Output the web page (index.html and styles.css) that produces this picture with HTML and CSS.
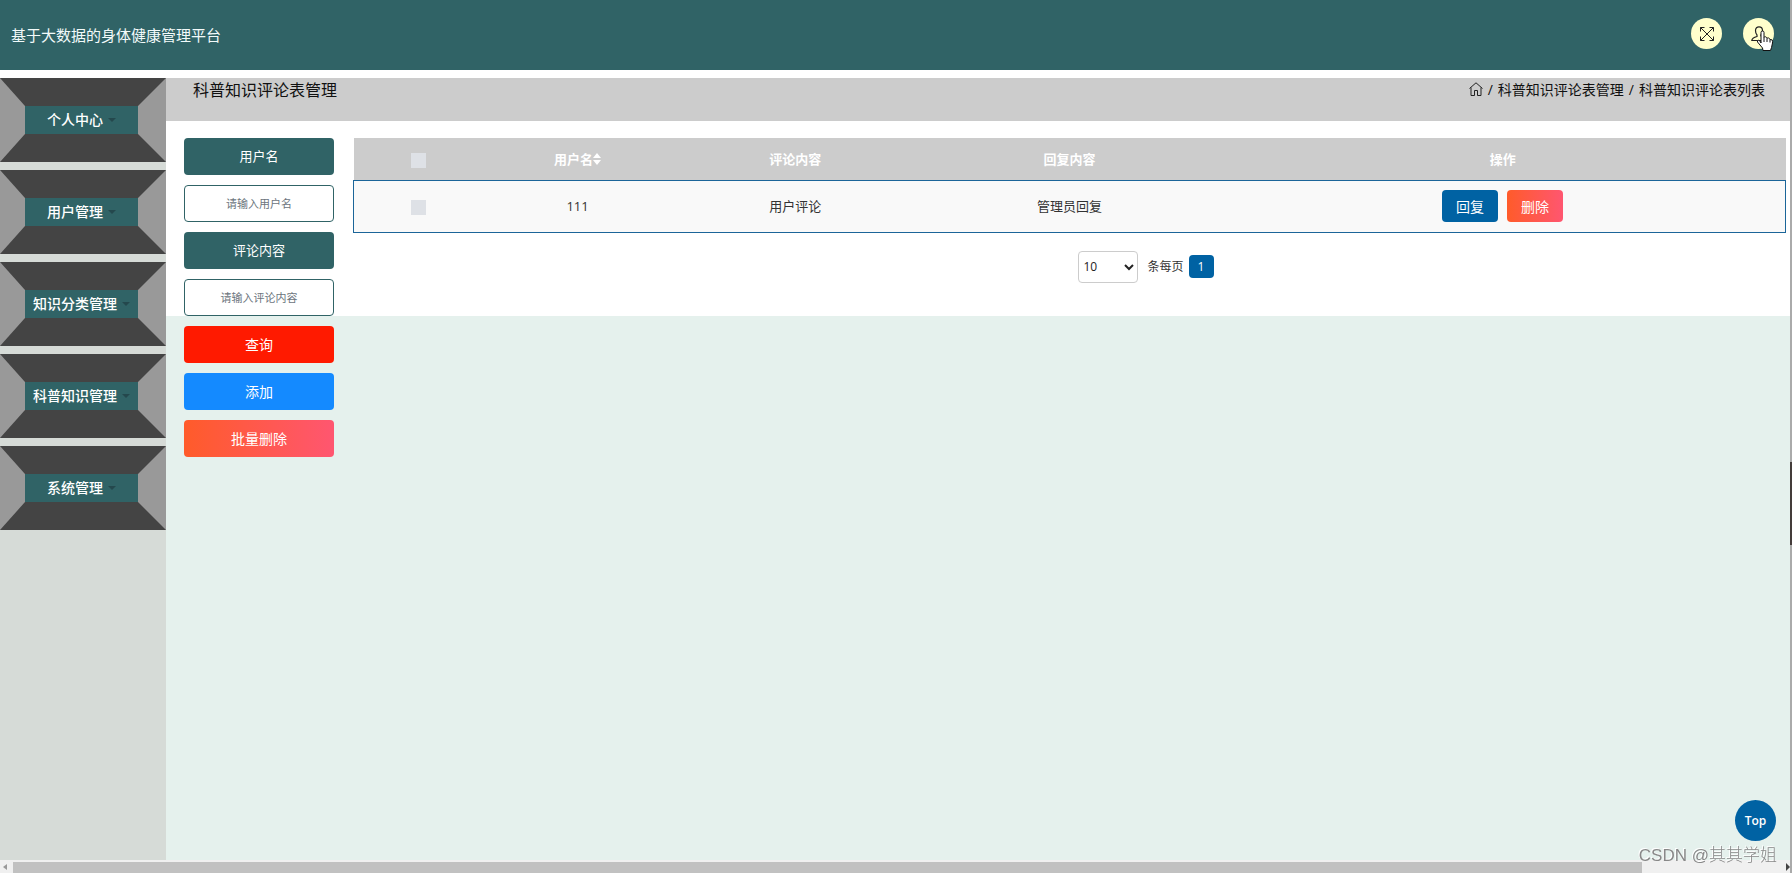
FILE: index.html
```
<!DOCTYPE html>
<html lang="zh-CN">
<head>
<meta charset="UTF-8">
<meta name="viewport" content="width=device-width, initial-scale=1.0">
<title>基于大数据的身体健康管理平台</title>
<link rel="stylesheet" href="styles.css">
</head>
<body>

<header class="topbar">
    <div class="brand">基于大数据的身体健康管理平台</div>
    <div class="topbar-actions">
        <button class="round-btn" type="button" aria-label="全屏">
            <svg width="16" height="16" viewBox="0 0 16 16" fill="none" stroke="#222" stroke-width="1">
                <path d="M1.5 1.5l13 13M14.5 1.5l-13 13M1.5 5.5v-4h4M10.5 1.5h4v4M14.5 10.5v4h-4M5.5 14.5h-4v-4"/>
            </svg>
        </button>
        <button class="round-btn" type="button" aria-label="用户">
            <svg width="16" height="16" viewBox="0 0 16 16" fill="none" stroke="#222" stroke-width="1.2">
                <path d="M6 9C4.8 7.8 4.5 6 4.5 4.5C4.500 2.200 6 .8 8 .8s3.500 1.400 3.500 3.700c0 1.500-.3 3.300-1.500 4.500v1l5 2.500v2H.8c.2-2 1.200-3 5.200-4z"/>
            </svg>
            <svg class="pointer" width="18" height="22" viewBox="0 0 18 22">
                <path d="M5 13V2.5Q5 1 6.5 1T8 2.5V7.5Q8.3 6.5 9.5 6.800T11 8.5Q11.5 7.5 12.7 8T14 9.8Q15 9 16 10T16.5 13L15.5 17.5L14.5 20.5H7L6.5 18L1.5 12Q1 10.5 2.5 10.3T5 13Z" fill="#fff" stroke="#111"/>
                <path d="M8 7.5V12M11 8.5V12M14 10V12.5" fill="none" stroke="#111"/>
            </svg>
        </button>
    </div>
</header>

<div class="layout">
    <nav class="sidebar">
        <button class="menu-item" type="button">个人中心<span class="caret"></span></button>
        <button class="menu-item" type="button">用户管理<span class="caret"></span></button>
        <button class="menu-item" type="button">知识分类管理<span class="caret"></span></button>
        <button class="menu-item" type="button">科普知识管理<span class="caret"></span></button>
        <button class="menu-item" type="button">系统管理<span class="caret"></span></button>
    </nav>

    <main class="content">
        <div class="page-head">
            <h1>科普知识评论表管理</h1>
            <div class="breadcrumb">
                <a href="#" aria-label="首页">
                    <svg width="14" height="14" viewBox="0 0 14 14" fill="none" stroke="#222" stroke-width="1">
                        <path d="M.5 6.5L7 .8l6.5 5.7M2 5.5v8h3.5v-5h3v5H12v-8"/>
                    </svg>
                </a>
                <span>/</span>
                <span>科普知识评论表管理</span>
                <span>/</span>
                <span>科普知识评论表列表</span>
            </div>
        </div>

        <div class="panel">
            <form class="filters">
                <label class="filter-label" for="username">用户名</label>
                <input class="filter-input" id="username" type="text" placeholder="请输入用户名">
                <label class="filter-label" for="comment">评论内容</label>
                <input class="filter-input" id="comment" type="text" placeholder="请输入评论内容">
                <button class="filter-btn search" type="button">查询</button>
                <button class="filter-btn add" type="button">添加</button>
                <button class="filter-btn remove" type="button">批量删除</button>
            </form>

            <div class="list">
                <table class="data-table">
                    <thead>
                        <tr>
                            <th class="col-check"><input class="check" type="checkbox" aria-label="全选"></th>
                            <th class="col-user">用户名<svg class="sort" width="8" height="12" viewBox="0 0 8 12" fill="#fff"><path d="M0 5l4-5 4 5zM0 7l4 5 4-5z"/></svg></th>
                            <th class="col-comment">评论内容</th>
                            <th class="col-reply">回复内容</th>
                            <th>操作</th>
                        </tr>
                    </thead>
                    <tbody>
                        <tr>
                            <td><input class="check" type="checkbox" aria-label="选择"></td>
                            <td>111</td>
                            <td>用户评论</td>
                            <td>管理员回复</td>
                            <td>
                                <div class="row-actions">
                                    <button class="row-btn reply" type="button">回复</button>
                                    <button class="row-btn remove" type="button">删除</button>
                                </div>
                            </td>
                        </tr>
                    </tbody>
                </table>

                <div class="pagination">
                    <select class="page-size" id="page-size">
                        <option>10</option>
                        <option>25</option>
                        <option>50</option>
                    </select>
                    <label class="page-text" for="page-size">条每页</label>
                    <button class="page-num" type="button">1</button>
                </div>
            </div>
        </div>
    </main>
</div>

<div class="scrollbar">
    <svg class="arrow" width="13" height="12" viewBox="0 0 13 12"><path d="M3 6l4-3v6z" fill="#999"/></svg>
    <div class="thumb"></div>
    <svg class="arrow" width="13" height="12" viewBox="0 0 13 12"><path d="M9 2l4 4-4 4z" fill="#444"/></svg>
</div>

<button class="back-top" type="button">Top</button>
<div class="watermark">CSDN @其其学姐</div>

</body>
</html>
```

FILE: styles.css
```
* {
    box-sizing: border-box;
}
html {
    background: linear-gradient(#aaa 0 462px, #443c3a 462px 545px, #aaa 545px);
}
body {
    margin: 0 2px 0 0;
    min-height: 100vh;
    display: flex;
    flex-direction: column;
    background-color: #fff;
    color: #333;
    font-family: "Open Sans", "Noto Sans CJK SC", sans-serif;
    font-size: 13px;
    line-height: 20px;
}
button, input, select {
    font-family: inherit;
    margin: 0;
}
button {
    border: none;
    padding: 0;
    cursor: pointer;
}

/* Top bar */
.topbar {
    display: flex;
    align-items: center;
    justify-content: space-between;
    height: 70px;
    padding: 0 16px 3px 11px;
    margin-bottom: 8px;
    background-color: #306366;
}
.brand {
    color: #f2fafa;
    font-size: 15px;
    padding-top: 2px;
}
.topbar-actions {
    display: flex;
    gap: 21px;
}
.round-btn {
    position: relative;
    display: flex;
    align-items: center;
    justify-content: center;
    width: 31px;
    height: 31px;
    border-radius: 50%;
    background-color: #ffffcc;
}
.pointer {
    position: absolute;
    left: 13px;
    top: 12px;
}

/* Side menu */
.layout {
    display: flex;
    flex: 1;
}
.sidebar {
    display: flex;
    flex-direction: column;
    gap: 8px;
    width: 166px;
    background-color: #d6dbd7;
}
.menu-item {
    display: flex;
    align-items: center;
    justify-content: center;
    gap: 5px;
    height: 84px;
    border: 28px solid;
    border-left-width: 25px;
    border-color: #444 #999;
    background-color: #306366;
    background-clip: padding-box;
    color: #fff;
    font-size: 14px;
    font-weight: 500;
    line-height: 20px;
    white-space: nowrap;
}
.caret {
    border: 4px solid transparent;
    border-top-color: #24484d;
    border-bottom: none;
}

/* Content */
.content {
    flex: 1;
    min-width: 0;
    background-color: #e5f1ed;
}
.page-head {
    display: flex;
    justify-content: space-between;
    height: 43px;
    padding: 2px 25px 0 27px;
    background-color: #ccc;
    color: #111;
}
.page-head h1 {
    margin: 0;
    font-size: 16px;
    font-weight: 400;
    line-height: 20px;
}
.breadcrumb {
    display: flex;
    gap: 5px;
    font-size: 14px;
}
.breadcrumb svg {
    display: block;
    margin-top: 2px;
}
.panel {
    display: flex;
    gap: 19px;
    padding: 17px 4px 33px 18px;
    background-color: #fff;
}

/* The filter column is allowed to run past the white panel */
.filters {
    display: flex;
    flex-direction: column;
    gap: 10px;
    width: 150px;
    height: 0;
}
.filter-label, .filter-input, .filter-btn {
    flex: none;
    width: 100%;
    height: 37px;
    border-radius: 4px;
    text-align: center;
    line-height: 37px;
}
.filter-label {
    background-color: #306366;
    color: #fff;
    font-size: 13px;
}
.filter-input {
    padding: 0 8px;
    border: 1px solid #306366;
    background-color: #fff;
    font-size: 11px;
}
.filter-input::placeholder {
    color: #6c757d;
}
.filter-btn {
    color: #fff;
    font-size: 14px;
}
.search {
    background-color: #ff1a00;
}
.add {
    background-color: #148aff;
}
.remove {
    background: linear-gradient(to right, #ff5b2a, #ff5670);
}

/* Table */
.list {
    flex: 1;
    min-width: 0;
}
.data-table {
    width: 100%;
    table-layout: fixed;
    border-collapse: collapse;
    text-align: center;
}
.data-table th {
    height: 42px;
    padding: 0;
    background-color: #ccc;
    color: #fff;
    font-weight: 700;
}
.data-table td {
    height: 52px;
    padding: 0;
}
.data-table tbody tr {
    border: 1px solid #1b6599;
    background-color: #f9f9f9;
}
.col-check {
    width: 9.1%;
}
.col-user {
    width: 13.1%;
}
.col-comment {
    width: 17.3%;
}
.col-reply {
    width: 21%;
}
.sort {
    vertical-align: -1px;
}
.check {
    appearance: none;
    width: 15px;
    height: 15px;
    background-color: #dee1e6;
    vertical-align: middle;
}
.row-actions {
    display: flex;
    justify-content: center;
    gap: 9px;
}
.row-btn {
    width: 56px;
    height: 32px;
    border-radius: 4px;
    color: #fff;
    font-size: 14px;
}
.reply {
    background-color: #0062a3;
}

/* Pagination */
.pagination {
    display: flex;
    align-items: center;
    justify-content: center;
    padding: 18px 0 0 153px;
    font-size: 12px;
}
.page-size {
    width: 60px;
    height: 32px;
    border: 1px solid #ccc;
    border-radius: 4px;
    background-color: #fff;
    color: #222;
    font-size: 12px;
}
.page-text {
    margin: 0 5px 0 9px;
}
.page-num {
    width: 25px;
    height: 23px;
    border-radius: 4px;
    background-color: #0062a3;
    color: #fff;
    font-size: 12px;
}

/* Bottom scrollbar */
.scrollbar {
    display: flex;
    height: 13px;
    padding-top: 1px;
    background-color: #f0f0f0;
}
.thumb {
    width: 91%;
    margin-right: auto;
    margin-top: 1px;
    background-color: #c1c1c1;
}

/* Floating items */
.back-top {
    position: fixed;
    right: 16px;
    bottom: 32px;
    width: 41px;
    height: 41px;
    border-radius: 50%;
    background-color: #0062a3;
    color: #fff;
    font-size: 12px;
    font-weight: 600;
}
.watermark {
    position: fixed;
    right: 15px;
    bottom: 7px;
    color: #888;
    font-family: "Liberation Sans", "Noto Sans CJK SC", sans-serif;
    font-size: 17px;
    font-weight: 300;
    text-shadow: -1px -1px 0 #fff;
}
```
